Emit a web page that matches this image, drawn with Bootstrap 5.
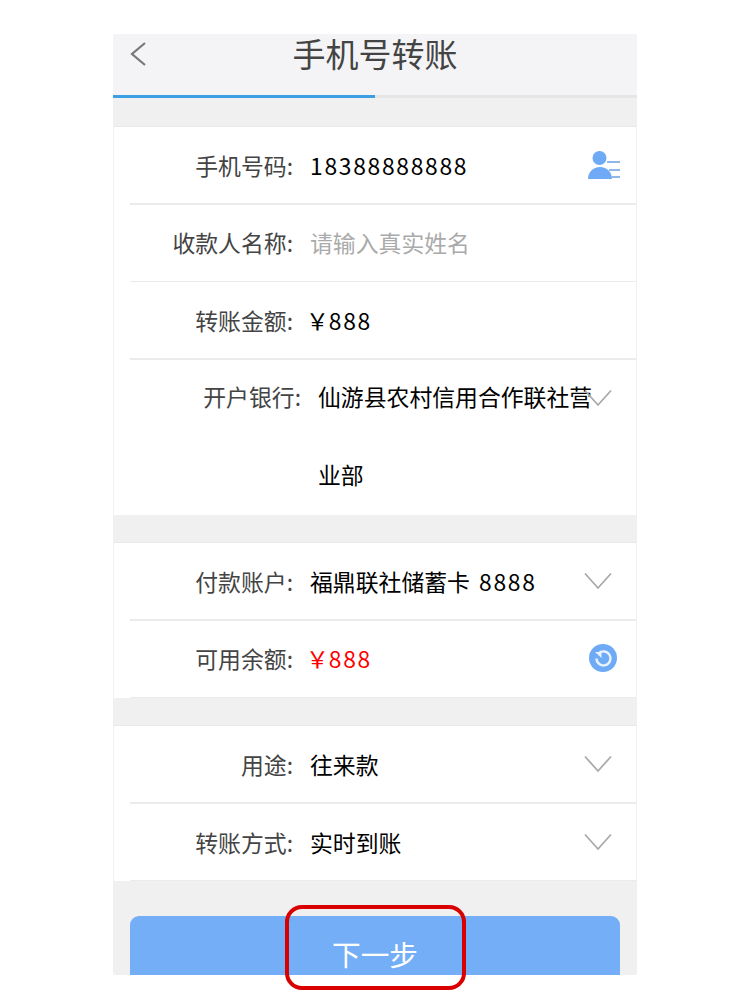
<!DOCTYPE html>
<html lang="zh">
<head>
<meta charset="utf-8">
<title>手机号转账</title>
<link href="https://cdn.jsdelivr.net/npm/bootstrap@5.3.0/dist/css/bootstrap.min.css" rel="stylesheet">
<style>
html,body{height:100%;background:#fff;overflow:hidden}
body{font-family:"Noto Sans CJK SC","Liberation Sans",sans-serif;position:relative;padding-top:34px}
.phone-shell{width:524px;height:941px;background:#f0f0f0;border-radius:2px}
.top-head{height:61px;background:#f4f4f6;color:#444}
.back-arrow{width:18px;height:26px;left:16px;top:7px;position:absolute}
.top-title{font-size:33px;line-height:38px}
.step-track{height:3px;background:#e6e6e6;border-radius:0}
.step-track .progress-bar{background:#3c9fe3}
.form-group-box{margin-top:28px;background:#fff;margin-left:1px;margin-right:1px;box-shadow:0 -1px 0 #e8e8e8;border-radius:0}
.first-box{margin-top:29px}
.form-line{padding:0 24px 2px 16px;min-height:77.6px;font-size:22.85px;border:0;background:transparent;color:#000}
.has-rule::after{content:"";position:absolute;left:16px;right:0;bottom:0;height:1.5px;background:#ebebeb}
.line-label{width:163px;text-align:right;color:#444;flex:none;margin-right:17px;line-height:32px}
.line-value{line-height:32px;white-space:nowrap}
.digit-text{letter-spacing:1.7px}
.digit-gap{margin-left:4px}
.yuan-sign{margin-left:-4px}
.hint-text{color:#aaa}
.red-text{color:#f00}
.bank-line{padding-bottom:0;min-height:155.2px}
.bank-label{width:171px;line-height:77.6px;margin-top:-1.5px}
.bank-value{width:275px;white-space:normal;flex:none;line-height:77.6px;margin-top:-1.5px}
.chev{width:28px;height:18px;flex:none;margin-left:auto}
.chev-over{margin-left:-9px;margin-top:29px}
.side-icon{flex:none;margin-left:auto}
.next-btn{display:block;width:490px;height:59px;margin:35px 0 0 17px;padding:17px 0 0;line-height:40px;background:#74aef6;border:0;color:#fff;font-size:28.7px;border-radius:9px 9px 0 0}
.next-btn:hover{background:#74aef6;color:#fff}
.mark-frame{position:absolute;left:285px;top:905px;width:181px;height:85px;border:4px solid #d90000;border-radius:17px}
</style>
</head>
<body>
<div class="phone-shell mx-auto">
  <header class="top-head position-relative text-center">
    <svg class="back-arrow" viewBox="0 0 18 26" fill="none" stroke="#777" stroke-width="2.2"><path d="M16 2 3 13l13 11"/></svg>
    <div class="top-title">手机号转账</div>
  </header>
  <div class="progress step-track">
    <div class="progress-bar" style="width:50%"></div>
  </div>

  <div class="list-group list-group-flush form-group-box first-box">
    <div class="list-group-item form-line has-rule d-flex align-items-center">
      <span class="line-label">手机号码:</span>
      <span class="line-value digit-text">18388888888</span>
      <svg class="side-icon" width="32" height="30" viewBox="0 0 32 30" style="margin-right:-8px"><circle cx="11.5" cy="8" r="7" fill="#6eaaf5"/><path d="M0 29c0-7 5-12 12-12s12 5 12 12z" fill="#6eaaf5"/><path d="M19 12h13M21 20h11M24 27h8" stroke="#8fb8ea" stroke-width="2"/></svg>
    </div>
    <div class="list-group-item form-line has-rule d-flex align-items-center">
      <span class="line-label">收款人名称:</span>
      <span class="line-value hint-text">请输入真实姓名</span>
    </div>
    <div class="list-group-item form-line has-rule d-flex align-items-center">
      <span class="line-label">转账金额:</span>
      <span class="line-value"><span class="yuan-sign">￥</span><span class="digit-text">888</span></span>
    </div>
    <div class="list-group-item form-line bank-line d-flex align-items-start">
      <span class="line-label bank-label">开户银行:</span>
      <span class="line-value bank-value">仙游县农村信用合作联社营业部</span>
      <svg class="chev chev-over" viewBox="0 0 28 18" fill="none" stroke="#aaa" stroke-width="1.8"><path d="M1 1.5 14 16 27 1.5"/></svg>
    </div>
  </div>

  <div class="list-group list-group-flush form-group-box">
    <div class="list-group-item form-line has-rule d-flex align-items-center">
      <span class="line-label">付款账户:</span>
      <span class="line-value">福鼎联社储蓄卡 <span class="digit-text digit-gap">8888</span></span>
      <svg class="chev" viewBox="0 0 28 18" fill="none" stroke="#aaa" stroke-width="1.8"><path d="M1 1.5 14 16 27 1.5"/></svg>
    </div>
    <div class="list-group-item form-line has-rule d-flex align-items-center">
      <span class="line-label">可用余额:</span>
      <span class="line-value red-text"><span class="yuan-sign">￥</span><span class="digit-text">888</span></span>
      <svg class="side-icon" width="28" height="28" viewBox="0 0 28 28" style="margin-right:-5px"><circle cx="14" cy="14" r="14" fill="#6eaaf5"/><path d="M9.5 9.5a7 7 0 1 1-2 5" fill="none" stroke="#e8f2fe" stroke-width="2.4"/><path d="M6 8h6.500v6z" fill="#e8f2fe"/></svg>
    </div>
  </div>

  <div class="list-group list-group-flush form-group-box">
    <div class="list-group-item form-line has-rule d-flex align-items-center">
      <span class="line-label">用途:</span>
      <span class="line-value">往来款</span>
      <svg class="chev" viewBox="0 0 28 18" fill="none" stroke="#aaa" stroke-width="1.8"><path d="M1 1.5 14 16 27 1.5"/></svg>
    </div>
    <div class="list-group-item form-line has-rule d-flex align-items-center">
      <span class="line-label">转账方式:</span>
      <span class="line-value">实时到账</span>
      <svg class="chev" viewBox="0 0 28 18" fill="none" stroke="#aaa" stroke-width="1.8"><path d="M1 1.5 14 16 27 1.5"/></svg>
    </div>
  </div>

  <button type="button" class="btn next-btn">下一步</button>
</div>
<div class="mark-frame"></div>
<script src="https://cdn.jsdelivr.net/npm/bootstrap@5.3.0/dist/js/bootstrap.bundle.min.js"></script>
</body>
</html>
